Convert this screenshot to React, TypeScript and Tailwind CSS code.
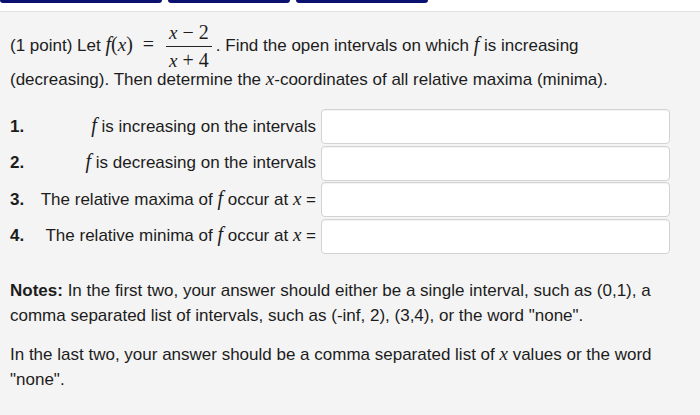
import React from 'react';

const M: React.FC<{ children: React.ReactNode; size?: 'f' | 'x' }> = ({ children, size = 'x' }) => (
  <span
    className={`italic leading-none [font-family:'Liberation_Serif','DejaVu_Serif',serif] ${size === 'f' ? 'text-[20px]' : 'text-[19px]'}`}
  >
    {children}
  </span>
);

const R: React.FC<{ children: React.ReactNode }> = ({ children }) => (
  <span className="text-[20px] leading-none [font-family:'Liberation_Serif','DejaVu_Serif',serif]">{children}</span>
);

const Frac: React.FC = () => (
  <span className="inline-flex flex-col items-center align-middle ml-[12px] mr-[4px] text-[20px] leading-[20px] [font-family:'Liberation_Serif',serif]">
    <span className="px-[3px] pb-[3px]"><i className="text-[19px]">x</i> − 2</span>
    <span className="w-full text-center border-t border-[#222] px-[3px] pt-[3px]"><i className="text-[19px]">x</i> + 4</span>
  </span>
);

interface Row {
  num: string;
  label: React.ReactNode;
}

const rows: Row[] = [
  { num: '1.', label: <><M size="f">f</M> is increasing on the intervals</> },
  { num: '2.', label: <><M size="f">f</M> is decreasing on the intervals</> },
  { num: '3.', label: <>The relative maxima of <M size="f">f</M> occur at <M>x</M> =</> },
  { num: '4.', label: <>The relative minima of <M size="f">f</M> occur at <M>x</M> =</> },
];

const App: React.FC = () => {
  return (
    <div className="w-[700px] h-[415px] overflow-hidden bg-[#f4f4f4] text-[#1c1c1c] text-[17px] [font-family:'Liberation_Sans',Arial,sans-serif]">
      {/* top nav strip */}
      <div className="h-[12px] bg-white border-b border-[#e2e2e2] flex gap-[6px]">
        <div className="w-[162px] h-[3px] bg-[#0b1170] rounded-b-[3px]" />
        <div className="w-[122px] h-[3px] bg-[#0b1170] rounded-b-[3px]" />
        <div className="w-[132px] h-[3px] bg-[#0b1170] rounded-b-[3px]" />
      </div>

      <div className="px-[10px]">
        <div className="mt-[11px] h-[46px] flex items-center">
          <span className="leading-[22px]">
            (1 point) Let <M size="f">f</M><R>(</R><M>x</M><R>)</R><R>&nbsp;&nbsp;=</R>
            <Frac />. Find the open intervals on which <M size="f">f</M> is increasing
          </span>
        </div>
        <p className="leading-[22px]">
          (decreasing). Then determine the <M>x</M>-coordinates of all relative maxima (minima).
        </p>

        <div className="mt-[18px] flex flex-col gap-[1.5px]">
          {rows.map((r, i) => (
            <div key={i} className="flex items-center h-[35px]">
              <span className="w-[24px] font-bold">{r.num}</span>
              <span className="w-[282px] text-right whitespace-nowrap">{r.label}</span>
              <div className="ml-[5px] w-[349px] h-[35px] bg-white border border-[#d3d3d3] rounded-[4px] shadow-[inset_0_1px_1px_rgba(0,0,0,0.05)]" />
            </div>
          ))}
        </div>

        <p className="mt-[24px] leading-[25px]">
          <b>Notes:</b> In the first two, your answer should either be a single interval, such as (0,1), a comma separated list of intervals, such as (-inf, 2), (3,4), or the word "none".
        </p>
        <p className="mt-[14px] leading-[25px]">
          In the last two, your answer should be a comma separated list of <M>x</M> values or the word "none".
        </p>
      </div>
    </div>
  );
};

export default App;
